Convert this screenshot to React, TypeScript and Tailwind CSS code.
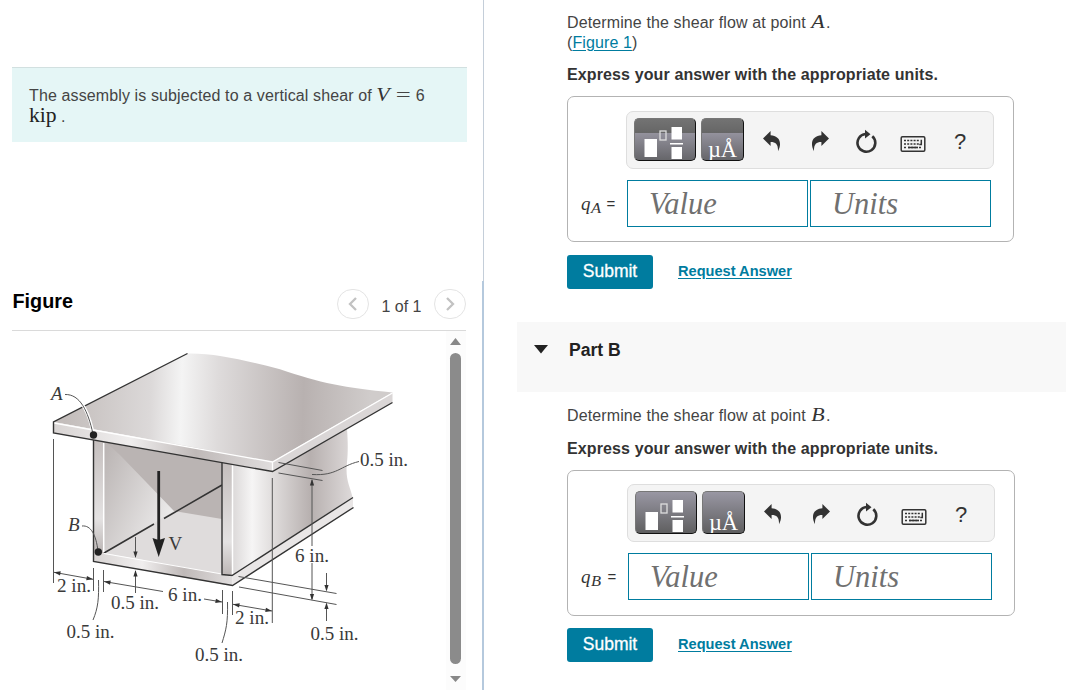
import React from "react";

const serif = "font-['Liberation_Serif',serif]";

function Toolbar({ banded }: { banded: boolean }) {
  const face = banded
    ? "bg-[linear-gradient(to_bottom,#737373_0%,#666_34%,#93919c_35%,#66666a_100%)]"
    : "bg-[linear-gradient(to_bottom,#9997a3_0%,#5f5f60_100%)]";
  return (
    <div className="flex h-[58px] w-[368px] items-start rounded-[7px] border border-[#dedede] bg-[#f4f4f4] pt-[6px] pl-[7px]">
      <button className={`h-[43px] w-[62px] shrink-0 rounded-[5px] border border-t-[#777] border-r-[#111] border-b-[#111] border-l-[#777] ${face}`}>
        <svg width="60" height="41" viewBox="1 1 60 41" fill="#fff">
          <rect x="10.500" y="21" width="12.500" height="18" />
          <rect x="26" y="13" width="6" height="9" fill="none" stroke="#ddd" strokeWidth="1.300" />
          <rect x="37.500" y="9" width="10.500" height="12.500" />
          <rect x="36" y="25" width="13" height="1.500" />
          <rect x="37.500" y="29" width="10.500" height="12" />
        </svg>
      </button>
      <button className={`ml-[5px] flex h-[43px] w-[43px] shrink-0 items-end justify-center overflow-hidden rounded-[5px] border border-t-[#777] border-r-[#111] border-b-[#111] border-l-[#777] ${face}`}>
        <span className={`${serif} -mb-[2px] text-[22.500px] leading-[24px] text-white`}>µÅ</span>
      </button>
      <div className="ml-[18px] flex h-[43px] items-center text-[#333]">
        <svg className="mt-[3px]" width="20" height="22" viewBox="0 0 20 22" fill="currentColor">
          <path d="M1 8.500 8.600 1v4.300C16 5.500 21 11.500 16 21.200 16.300 14 13.500 11.800 8.600 11.900V16Z" />
        </svg>
        <svg className="ml-[28px] mt-[3px]" width="20" height="22" viewBox="0 0 20 22" fill="currentColor">
          <path d="M19 8.500 11.400 1v4.300C4 5.500-1 11.500 4 21.200 3.700 14 6.500 11.800 11.400 11.900V16Z" />
        </svg>
        <svg className="ml-[25px] mt-[4px]" width="22" height="25" viewBox="0 0 22 25">
          <path d="M17.300 7.200A8.900 8.900 0 1 1 10.500 5" fill="none" stroke="currentColor" strokeWidth="2.600" />
          <path d="M10 .8 15.500 5.200 10 9.600Z" fill="currentColor" />
        </svg>
        <svg className="ml-[23px] mt-[9px]" width="26" height="18" viewBox="0 0 26 18" fill="none" stroke="currentColor">
          <rect x="1.200" y="1.700" width="23.600" height="14.600" rx="1.200" strokeWidth="1.500" />
          <path d="M4 5.500h15M4 9h16M4 12.500h3M8 12.500h10M19 12.500h3" strokeWidth="1.600" strokeDasharray="2 1.200" />
          <path d="M8 12.500h10M21.300 4.700v4.800h-2" strokeWidth="1.500" />
        </svg>
        <span className="ml-[28px] mt-[4px] text-[22px] leading-6">?</span>
      </div>
    </div>
  );
}

function AnswerCard({ sub, banded }: { sub: string; banded: boolean }) {
  return (
    <div className={`h-[146px] rounded-[7px] border border-[#b3b3b3] ${banded ? "w-[447px] pt-[14px] pl-[58px]" : "w-[448px] pt-[13px] pl-[59px]"}`}>
      <Toolbar banded={banded} />
      <div className="mt-[11px] -ml-[59px] flex">
        <div className={`flex w-[60px] shrink-0 items-center ${serif} text-[#333]`}>
          <span className={`${banded ? "ml-[14px]" : "ml-[13px]"} text-[19px] italic`}>q</span>
          <span className="mt-[9px] inline-block w-[11px] origin-left scale-x-[1.1] text-[15px] italic">{sub}</span>
          <span className={`${banded ? "ml-[5px]" : "ml-[6px]"} font-['Liberation_Sans',sans-serif] text-[15px]`}>=</span>
        </div>
        <div className={`flex h-[47px] w-[181px] shrink-0 items-center border border-[#007c9f] pl-[21px] ${serif} text-[30.500px] text-[#707070] italic`}>Value</div>
        <div className={`ml-[2px] flex h-[47px] w-[181px] shrink-0 items-center border border-[#007c9f] pl-[21px] ${serif} text-[30.500px] text-[#707070] italic`}>Units</div>
      </div>
    </div>
  );
}

function Actions({ gap }: { gap: string }) {
  return (
    <div className={`${gap} flex h-[34px] items-center`}>
      <button className="h-[34px] w-[86px] rounded-[3px] bg-[#007c9f] pb-[2px] text-[17.500px] text-white [-webkit-text-stroke:0.3px_white]">Submit</button>
      <a className="ml-[25px] pb-[2px] text-[14.600px] font-bold text-[#007c9f] underline underline-offset-2">Request Answer</a>
    </div>
  );
}

function Question({ point }: { point: string }) {
  return (
    <div className="h-5 whitespace-nowrap">
      <span className="tracking-[0.120px]">Determine the shear flow at point </span>
      <span className={`${serif} ml-[2px] mr-[2px] inline-block scale-x-[1.15] leading-5 text-[19px] italic text-[#333]`}>{point}</span>.
    </div>
  );
}

function Arrow({ x, y, a }: { x: number; y: number; a: number }) {
  return <path d="M0 0-6.500-2.100V2.100Z" fill="#333" transform={`translate(${x} ${y}) rotate(${a})`} />;
}

const labels: [number, number, number, string][] = [
  [57, 592, 34, "2 in."],
  [66.500, 638, 48, "0.5 in."],
  [111, 609, 48, "0.5 in."],
  [168, 600.500, 34, "6 in."],
  [195, 661, 48, "0.5 in."],
  [235, 624, 34, "2 in."],
  [295, 561.500, 34, "6 in."],
  [310.500, 639.500, 48, "0.5 in."],
  [360, 466, 48, "0.5 in."],
];

function BeamFigure() {
  return (
    <svg width="434" height="359" viewBox="12 331 434 359" className="shrink-0">
      <defs>
        <linearGradient id="top" gradientUnits="userSpaceOnUse" x1="65" y1="410" x2="370" y2="418">
          <stop offset="0" stopColor="#c3bdbb" />
          <stop offset=".28" stopColor="#dcd9d9" />
          <stop offset=".38" stopColor="#f4f4f4" />
          <stop offset=".5" stopColor="#dedbdb" />
          <stop offset=".78" stopColor="#b8b1b0" />
          <stop offset="1" stopColor="#d0cccb" />
        </linearGradient>
        <linearGradient id="edge">
          <stop offset="0" stopColor="#d8d4d3" />
          <stop offset=".35" stopColor="#f0eeee" />
          <stop offset=".65" stopColor="#bfb9b8" />
          <stop offset="1" stopColor="#e0dddd" />
        </linearGradient>
        <linearGradient id="side">
          <stop offset="0" stopColor="#dcd9d9" />
          <stop offset=".16" stopColor="#f6f5f5" />
          <stop offset=".65" stopColor="#b7b0af" />
          <stop offset="1" stopColor="#dedada" />
        </linearGradient>
        <linearGradient id="wall" x1="0" y1="0" x2="1" y2=".7">
          <stop offset="0" stopColor="#b8b2b1" />
          <stop offset="1" stopColor="#eeeded" />
        </linearGradient>
        <linearGradient id="web" x1="0" y1="0" x2="0" y2="1">
          <stop offset="0" stopColor="#c4bebd" />
          <stop offset=".7" stopColor="#e4e2e2" />
          <stop offset="1" stopColor="#bbb5b4" />
        </linearGradient>
      </defs>

      <path d="M104 440 222 461V576L104 553Z" fill="#dfdcdc" />
      <path d="M104 440 125 449 174 511 104 553Z" fill="url(#wall)" />
      <path d="M104 440 222 461V519L174 511 120 455Z" fill="#bab4b3" />
      <path d="M104 553 154 524M164 518.500 222 485" stroke="#333" strokeWidth="1.500" />
      <path d="M233 465 272 471 347 429C348 442 348 453 347 462 345 480 350 486 352.500 497L233 575Z" fill="url(#side)" />
      <path d="M93.500 439 104 441V553H93.500Z" fill="url(#web)" />
      <path d="M103.700 443V552" stroke="#fff" strokeWidth="1.500" />
      <path d="M222 462H233V576L222 574Z" fill="url(#web)" />
      <path d="M232.500 465V575" stroke="#fff" strokeWidth="1.500" />
      <path d="M93.500 553 104 553 222 574 232.500 577V586L93.500 561.500Z" fill="url(#edge)" />
      <path d="M104 553.500 222 574" stroke="#fff" />
      <path d="M232.500 576 353 498V507.500L232.500 586Z" fill="#e9e6e6" />
      <path d="M93.500 438V561.500L232.500 585.500 353.500 507.500M222 462V574.500L232 575.500 353 497.500" fill="none" stroke="#333" strokeWidth="1.400" />

      <path d="M53.500 422 187.500 353.500C215 353 244 360 280 369.300 320 383 345 388 392.500 392.500L272.500 462Z" fill="url(#top)" />
      <path d="M53.500 422 272.500 461.500V471.500L53.500 433Z" fill="url(#edge)" />
      <path d="M272.500 461.500 392.500 392.500V402.500L272.500 471.500Z" fill="#dad6d6" />
      <path d="M54 423 272.500 462 392.500 393M272.500 462V470" fill="none" stroke="#fff" strokeWidth="1.300" />
      <path d="M187.500 353.500 53.500 422V433L272.500 471.500 392.500 402.500" fill="none" stroke="#333" strokeWidth="1.400" />

      <g fill="none" stroke="#555" strokeWidth="1">
        <path d="M53.500 439V583M93.500 568V591M103.500 570V592M222.500 590V614M232.500 591V615M272.300 478V623" />
        <path d="M54 572.300 93 579.300M104 581.500 163 591.500M204 599 222 602M233 604.300 272 611" />
        <path d="M135.500 537V557M135.500 571V593M312 480V546M312 563V599M326.500 573V590M326.500 604V621" />
        <path d="M238.500 576.500 336.500 593.500M239 587 336.500 604.500M278.500 462.500 322.500 470.500M278.500 473 322.500 480.500" />
        <path d="M98.500 580C99 599 98 608 93 620M227.500 602C228 623 226 630 222 643M312 474.500C337 476 340 466 359 461.500" />
        <path d="M65 394.500C80 394 88 411 92.500 430" stroke="#fff" strokeWidth="3" />
        <path d="M65 394.500C80 394 88 411 93 434M82 526C91 525 96 535 98 551" />
      </g>
      <Arrow x={54} y={572.3} a={190} /><Arrow x={93} y={579.3} a={10} />
      <Arrow x={104} y={581.5} a={190} /><Arrow x={222} y={602} a={10} />
      <Arrow x={233} y={604.3} a={190} /><Arrow x={272} y={611} a={10} />
      <Arrow x={135.5} y={558} a={90} /><Arrow x={135.5} y={570} a={270} />
      <Arrow x={312} y={479} a={270} /><Arrow x={312} y={600.5} a={90} />
      <Arrow x={326.500} y={591.5} a={90} /><Arrow x={326.500} y={602.5} a={270} />
      <circle cx="93.500" cy="435" r="3.700" fill="#222" />
      <circle cx="98.300" cy="552" r="3.700" fill="#222" />
      <path d="M158.700 471V540" stroke="#222" strokeWidth="2.800" />
      <path d="M152.500 538 158.700 540 165 538 158.700 557Z" fill="#222" />
      <g fill="#3a3a3a" fontFamily="Liberation Serif, serif" fontSize="19">
        {labels.map(([x, y, w, t]) => (
          <text key={`${x}-${y}`} x={x} y={y} textLength={w} lengthAdjust="spacingAndGlyphs">{t}</text>
        ))}
        <text x="51" y="400" fontStyle="italic">A</text>
        <text x="68" y="531" fontStyle="italic">B</text>
        <text x="168.500" y="550">V</text>
      </g>
    </svg>
  );
}

export default function App() {
  return (
    <div className="flex h-[690px] w-[1066px] overflow-hidden bg-white font-['Liberation_Sans',Arial,sans-serif] text-[16px] leading-5 text-[#444]">
      <div className="flex w-[484px] shrink-0 flex-col">
        <div className="h-[281px] border-r border-[#c4ced9] pt-[67px] pl-3">
          <div className="h-[75px] w-[455px] border-t border-[#d2e0e0] bg-[#e5f6f6] pt-[17px] pl-[17px]">
            <div className="h-5 whitespace-nowrap">
              <span className="tracking-[0.120px]">The assembly is subjected to a vertical shear of </span>
              <span className={`${serif} ml-px inline-block scale-x-[1.15] leading-5 text-[19px] italic text-[#333]`}>V</span>
              <span className={`${serif} ml-[9px] mr-[7px] inline-block scale-x-[1.4] leading-5 text-[19px]`}>=</span>
              <span>6</span>
            </div>
            <div className="h-5 whitespace-nowrap"><span className={`${serif} mr-[2px] inline-block origin-left scale-x-[1.08] leading-5 text-[20px] text-[#222]`}>kip</span> .</div>
          </div>
        </div>
        <div className="h-[409px] border-r-2 border-[#b5c9dd] pl-3">
          <div className="flex h-[50px] w-[454px] items-start border-b border-[#dadada]">
            <h2 className="mt-[10px] ml-[0.500px] text-[19.800px] font-bold text-black">Figure</h2>
            <button className="mt-[8px] ml-auto flex h-[30px] w-8 items-center justify-center rounded-full border border-[#e4e4e4]">
              <svg width="10" height="14" viewBox="0 0 10 14" fill="none" stroke="#c2c2c2" strokeWidth="2.300"><path d="M8 1 2 7l6 6" /></svg>
            </button>
            <span className="mt-4 w-[65px] text-center">1 of 1</span>
            <button className="mt-[8px] flex h-[30px] w-8 items-center justify-center rounded-full border border-[#e4e4e4]">
              <svg width="10" height="14" viewBox="0 0 10 14" fill="none" stroke="#c2c2c2" strokeWidth="2.300"><path d="m2 1 6 6-6 6" /></svg>
            </button>
          </div>
          <div className="flex h-[359px] w-[454px]">
            <BeamFigure />
            <div className="flex w-5 flex-col items-center bg-[#fcfcfc] pt-[7px] pr-[2px]">
              <svg width="11" height="7" viewBox="0 0 11 7" fill="#888"><path d="M5.500 0 11 7H0Z" /></svg>
              <div className="mt-2 h-[311px] w-[11px] rounded-full bg-[#8b8b8b]" />
              <svg className="mt-[12px]" width="11" height="6" viewBox="0 0 11 6" fill="#888"><path d="M5.500 6 11 0H0Z" /></svg>
            </div>
          </div>
        </div>
      </div>

      <div className="flex w-[582px] flex-col">
        <div className="h-[322px] pt-[12px] pl-[83px]">
          <Question point="A" />
          <div className="mt-px h-5 tracking-[0.100px]">(<a className="text-[#007c9f] underline underline-offset-2">Figure 1</a>)</div>
          <div className="mt-[12px] mb-[11px] h-5 font-bold tracking-[0.120px] text-[#333]">Express your answer with the appropriate units.</div>
          <AnswerCard sub="A" banded />
          <Actions gap="mt-[13px]" />
        </div>
        <div className="ml-[33px] flex h-[70px] items-start bg-[#f8f8f8] pt-[18px] pl-[17px]">
          <svg className="mt-[5px]" width="14" height="9" viewBox="0 0 14 9" fill="#222"><path d="M0 0H14L7 8.500Z" /></svg>
          <h3 className="ml-[21px] text-[17.600px] font-bold text-[#222]">Part B</h3>
        </div>
        <div className="pt-[13px] pl-[83px]">
          <Question point="B" />
          <div className="mt-[14px] mb-[11px] h-5 font-bold tracking-[0.120px] text-[#333]">Express your answer with the appropriate units.</div>
          <AnswerCard sub="B" banded={false} />
          <Actions gap="mt-[12px]" />
        </div>
      </div>
    </div>
  );
}
